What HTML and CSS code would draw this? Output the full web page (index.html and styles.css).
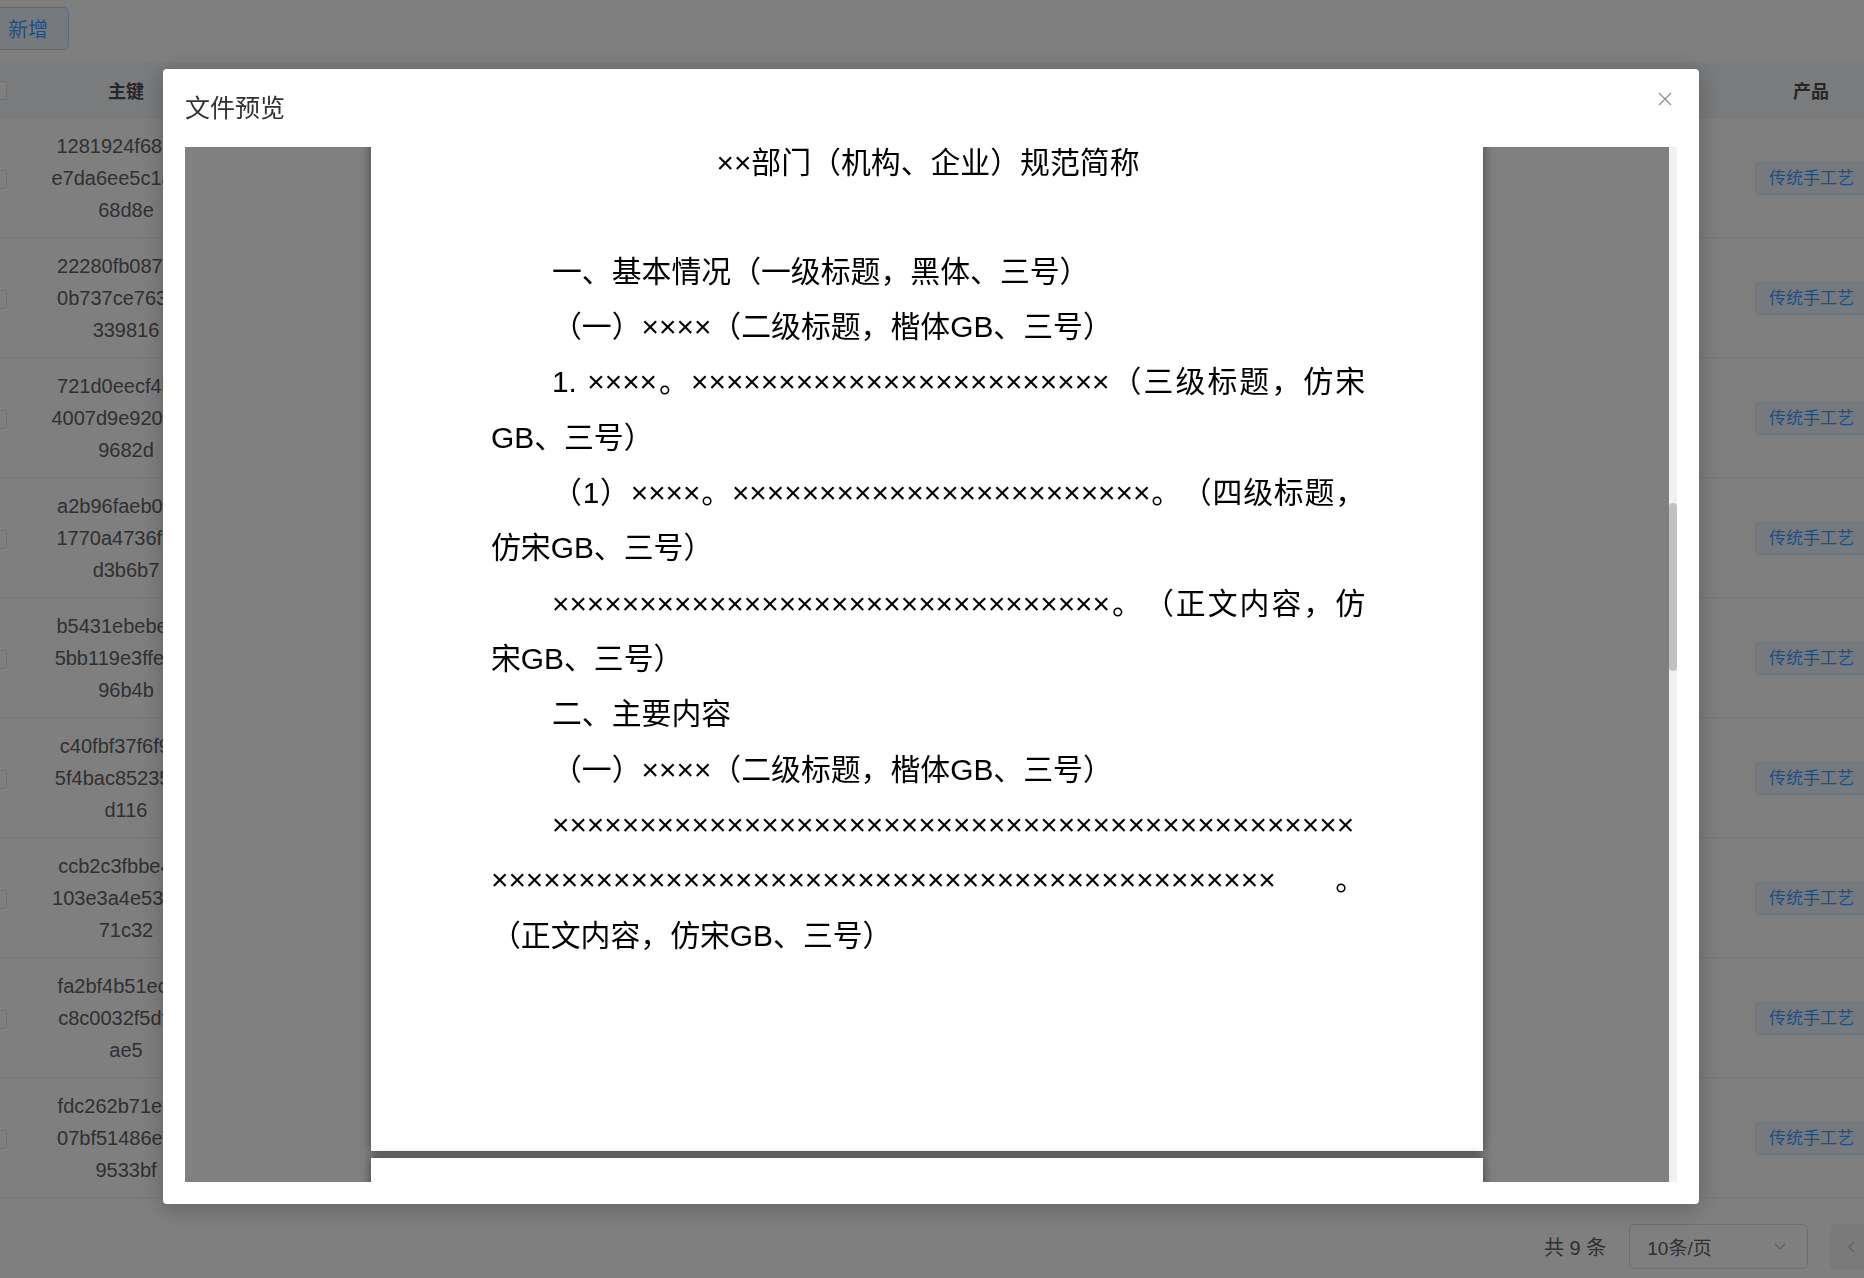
FILE: index.html
```html
<!DOCTYPE html>
<html lang="zh-CN">
<head>
<meta charset="utf-8">
<title>文件预览</title>
<link rel="stylesheet" href="styles.css">
</head>
<body>
<div class="app">
  <div class="toolbar"><button class="btn-add">新增</button></div>
  <table class="grid">
    <colgroup><col class="c-check"><col class="c-key"><col class="c-fill"><col class="c-prod"></colgroup>
    <thead>
      <tr><th><span class="cb"></span></th><th>主键</th><th></th><th>产品</th></tr>
    </thead>
    <tbody>
      <tr><td><span class="cb"></span></td><td>1281924f685b3<br>e7da6ee5c1a04f<br>68d8e</td><td></td><td><span class="tag">传统手工艺</span></td></tr>
      <tr><td><span class="cb"></span></td><td>22280fb087c4a<br>0b737ce763f21<br>339816</td><td></td><td><span class="tag">传统手工艺</span></td></tr>
      <tr><td><span class="cb"></span></td><td>721d0eecf4b18<br>4007d9e920fa3c<br>9682d</td><td></td><td><span class="tag">传统手工艺</span></td></tr>
      <tr><td><span class="cb"></span></td><td>a2b96faeb02c5<br>1770a4736fe19<br>d3b6b7</td><td></td><td><span class="tag">传统手工艺</span></td></tr>
      <tr><td><span class="cb"></span></td><td>b5431ebebe7f2<br>5bb119e3ffe80a<br>96b4b</td><td></td><td><span class="tag">传统手工艺</span></td></tr>
      <tr><td><span class="cb"></span></td><td>c40fbf37f6f9e1<br>5f4bac85235fc0<br>d116</td><td></td><td><span class="tag">传统手工艺</span></td></tr>
      <tr><td><span class="cb"></span></td><td>ccb2c3fbbe4a0<br>103e3a4e53cf9c<br>71c32</td><td></td><td><span class="tag">传统手工艺</span></td></tr>
      <tr><td><span class="cb"></span></td><td>fa2bf4b51ecf0c<br>c8c0032f5dfcf1<br>ae5</td><td></td><td><span class="tag">传统手工艺</span></td></tr>
      <tr><td><span class="cb"></span></td><td>fdc262b71ec0a<br>07bf51486ec3d<br>9533bf</td><td></td><td><span class="tag">传统手工艺</span></td></tr>
    </tbody>
  </table>
  <div class="pager">
    <span class="total">共 9 条</span>
    <div class="sel"><span>10条/页</span><svg width="12" height="7" viewBox="0 0 12 7"><path d="M1 1l5 5 5-5" stroke="#c0c4cc" stroke-width="1.3" fill="none"/></svg></div>
    <div class="btn-prev"><svg width="7" height="12" viewBox="0 0 7 12"><path d="M6 1L1 6l5 5" stroke="#c0c4cc" stroke-width="1.3" fill="none"/></svg></div>
  </div>
</div>

<div class="mask"></div>

<div class="dialog">
  <div class="dlg-head">
    <span class="dlg-title">文件预览</span>
    <button class="dlg-close"><svg width="14" height="14" viewBox="0 0 14 14"><path d="M1 1L13 13M13 1L1 13" stroke="#909399" stroke-width="1.4" fill="none"/></svg></button>
  </div>
  <div class="dlg-body">
    <div class="viewer">
      <div class="doc">
        <div class="doc-inner">
          <section class="pg pg1">
            <div class="doc-text">
              <div class="ln title">××部门（机构、企业）规范简称</div>
              <div class="ln ind">一、基本情况（一级标题，黑体、三号）</div>
              <div class="ln ind">（一）××××（二级标题，楷体GB、三号）</div>
              <div class="ln ind jl">1. ××××。××××××××××××××××××××××××（三级标题，仿宋</div>
              <div class="ln">GB、三号）</div>
              <div class="ln ind jl">（1）××××。××××××××××××××××××××××××。（四级标题，</div>
              <div class="ln">仿宋GB、三号）</div>
              <div class="ln ind jl">××××××××××××××××××××××××××××××××。（正文内容，仿</div>
              <div class="ln">宋GB、三号）</div>
              <div class="ln ind">二、主要内容</div>
              <div class="ln ind">（一）××××（二级标题，楷体GB、三号）</div>
              <div class="ln ind">××××××××××××××××××××××××××××××××××××××××××××××</div>
              <div class="ln split"><span>×××××××××××××××××××××××××××××××××××××××××××××</span><span>。</span></div>
              <div class="ln">（正文内容，仿宋GB、三号）</div>
            </div>
          </section>
          <section class="pg pg2"></section>
        </div>
      </div>
      <div class="vbar"><div class="vthumb"></div></div>
    </div>
  </div>
</div>
</body>
</html>
```

FILE: styles.css
```css
html, body {
  margin: 0;
  padding: 0;
  background: #fff;
}
body {
  width: 1864px;
  height: 1278px;
  overflow: hidden;
  font-family: "Liberation Sans", "Noto Sans CJK SC", sans-serif;
  color: #606266;
}

/* ---------- page behind the dialog ---------- */
.app {
  margin-left: -13px;
  width: 1924px;
}
.toolbar {
  height: 63px;
  padding-top: 7px;
  box-sizing: border-box;
}
.btn-add {
  display: block;
  width: 82px;
  height: 43px;
  padding: 0;
  border: 1px solid #b3d8ff;
  border-radius: 5px;
  background: #ecf5ff;
  color: #409eff;
  font-family: "Liberation Sans", "Noto Sans CJK SC", sans-serif;
  font-size: 20px;
}
.grid {
  border-collapse: collapse;
  table-layout: fixed;
  width: 1924px;
}
.c-check { width: 40px; }
.c-key { width: 198px; }
.c-fill { width: 1486px; }
.c-prod { width: 200px; }
.grid th {
  height: 54px;
  padding: 0;
  background: #f5f7fa;
  border-bottom: 1px solid #ebeef5;
  font-size: 18px;
  font-weight: bold;
  color: #4a4d55;
  text-align: center;
}
.grid td {
  height: 119px;
  padding: 0;
  border-bottom: 1px solid #ebeef5;
  font-size: 20px;
  line-height: 32px;
  text-align: center;
  vertical-align: middle;
  white-space: nowrap;
  color: #606266;
}
.grid th:first-child,
.grid td:first-child {
  text-align: left;
  padding-left: 1px;
}
.cb {
  display: inline-block;
  width: 17px;
  height: 17px;
  border: 1px solid #dcdfe6;
  border-radius: 3px;
  background: #fff;
  vertical-align: middle;
}
.tag {
  display: inline-block;
  height: 33px;
  line-height: 31px;
  padding: 0 12px 0 13px;
  box-sizing: border-box;
  border: 1px solid #d9ecff;
  border-radius: 4px;
  background: #ecf5ff;
  color: #409eff;
  font-size: 17px;
  vertical-align: middle;
}
.pager {
  display: flex;
  align-items: center;
  height: 45px;
  margin-top: 26px;
  padding-left: 1557px;
  font-size: 19px;
  color: #606266;
}
.total {
  font-size: 20px;
}
.sel {
  margin-left: 23px;
  width: 179px;
  height: 45px;
  box-sizing: border-box;
  padding: 0 21px 0 17px;
  border: 1px solid #dcdfe6;
  border-radius: 5px;
  background: #fff;
  display: flex;
  align-items: center;
  justify-content: space-between;
}
.btn-prev {
  margin-left: 22px;
  width: 60px;
  height: 45px;
  box-sizing: border-box;
  padding-left: 18px;
  border-radius: 4px;
  background: #f4f4f5;
  display: flex;
  align-items: center;
}

/* ---------- mask + dialog ---------- */
.mask {
  position: fixed;
  left: 0;
  top: 0;
  right: 0;
  bottom: 0;
  background: rgba(0, 0, 0, 0.5);
}
.dialog {
  position: fixed;
  left: 163px;
  top: 69px;
  width: 1536px;
  background: #fff;
  border-radius: 4px;
  box-shadow: 0 4px 24px rgba(0, 0, 0, 0.25);
}
.dlg-head {
  height: 78px;
  padding: 0 22px;
  display: flex;
  align-items: center;
  justify-content: space-between;
}
.dlg-title {
  font-size: 25px;
  line-height: 1;
  color: #303133;
}
.dlg-close {
  align-self: flex-start;
  margin-top: 23px;
  margin-right: 5px;
  width: 14px;
  height: 14px;
  padding: 0;
  border: 0;
  background: none;
  display: block;
}
.dlg-close svg { display: block; }
.dlg-body {
  padding: 0 22px 22px;
}
.viewer {
  display: flex;
  height: 1035px;
}
.doc {
  flex: 1;
  overflow: hidden;
  background: #808080;
}
.doc-inner {
  display: flex;
  flex-direction: column;
  align-items: center;
  margin-top: -60px;
}
.pg {
  flex: none;
  width: 1112px;
  box-sizing: border-box;
  padding: 48.33px 118px 0 120px;
  margin-bottom: 7px;
  background: #fff;
  box-shadow: 0 0 10px rgba(0, 0, 0, 0.5);
}
.pg1 { height: 1064px; }
.pg2 { height: 400px; }
.vbar {
  width: 8px;
  background: #f1f1f1;
}
.vthumb {
  margin-top: 356px;
  height: 168px;
  border-radius: 4px;
  background: #c1c1c1;
}

/* ---------- document text ---------- */
.doc-text {
  font-family: "Liberation Sans", "Noto Sans CJK SC", sans-serif;
  font-size: 29.87px;
  line-height: 55.33px;
  color: #000;
  text-spacing-trim: space-all;
}
.title {
  text-align: center;
  margin-bottom: 53px;
}
.ind { padding-left: 61px; }
.jl {
  text-align: justify;
  text-align-last: justify;
}
.split {
  display: flex;
  justify-content: space-between;
}
```
